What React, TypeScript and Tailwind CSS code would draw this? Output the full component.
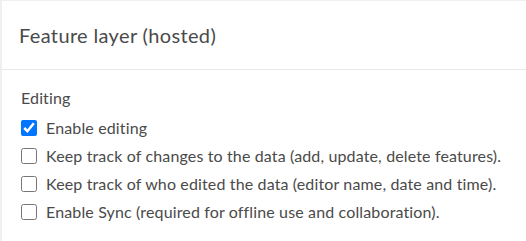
import React from "react";

const rows = [
  { label: "Enable editing", checked: true },
  { label: "Keep track of changes to the data (add, update, delete features).", checked: false },
  { label: "Keep track of who edited the data (editor name, date and time).", checked: false },
  { label: "Enable Sync (required for offline use and collaboration).", checked: false },
];

export default function App() {
  return (
    <div
      className="w-[526px] h-[241px] overflow-hidden bg-white border-l-2 border-t border-[#efefef] text-[#4a4a4a]"
      style={{ fontFamily: "Lato, 'Noto Sans', sans-serif" }}
    >
      <div className="h-[69px] flex items-center pl-[17px] border-b border-[#e8e8e8]">
        <span className="text-[20px] leading-none tracking-[0.35px]">Feature layer (hosted)</span>
      </div>
      <div className="pl-[19px] pt-4">
        <div className="text-[16px] leading-6 mb-1 tracking-[0.14px]">Editing</div>
        {rows.map((r) => (
          <label key={r.label} className="flex items-center h-[28px] gap-[9px] text-[16px] tracking-[0.14px]">
            <input
              type="checkbox"
              defaultChecked={r.checked}
              className="w-[16px] h-[16px] m-0 shrink-0"
            />
            <span>{r.label}</span>
          </label>
        ))}
      </div>
    </div>
  );
}
